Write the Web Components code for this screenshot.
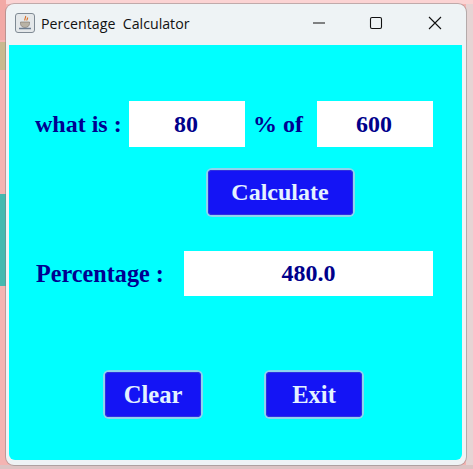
<!DOCTYPE html>
<html>
<head>
<meta charset="utf-8">
<title>Percentage Calculator</title>
<style>
  html, body { margin: 0; height: 469px; overflow: hidden; }
</style>
</head>
<body>
<desk-top>
  <app-window title="Percentage  Calculator">
    <calc-form></calc-form>
  </app-window>
</desk-top>

<script>
class DeskTop extends HTMLElement {
  constructor() {
    super();
    this.attachShadow({ mode: 'open' });
    this.shadowRoot.innerHTML = `
      <style>
        :host {
          display: block;
          width: 473px;
          height: 469px;
          box-sizing: border-box;
          padding: 4px 7px 4px 6px;
          background:
            linear-gradient(#f2a9a5, #f2a9a5) 0 0 / 6px 40px no-repeat,
            linear-gradient(#c9b98f, #c9b98f) 0 42px / 6px 28px no-repeat,
            linear-gradient(#45b9b0, #45b9b0) 0 194px / 6px 92px no-repeat,
            linear-gradient(#fbd3d3, #fbd3d3) 0 0 / 100% 4px no-repeat,
            linear-gradient(#dcc4c4, #dcc4c4) 0 465px / 100% 4px no-repeat,
            linear-gradient(#e6d4d4, #e6d4d4) 466px 0 / 7px 100% no-repeat,
            #f4b4b2;
        }
      </style>
      <slot></slot>`;
  }
}

class AppWindow extends HTMLElement {
  constructor() {
    super();
    this.attachShadow({ mode: 'open' });
    this.shadowRoot.innerHTML = `
      <style>
        :host {
          display: flex;
          flex-direction: column;
          width: 460px;
          height: 461px;
          box-sizing: border-box;
          background: #eef3f5;
          border-radius: 8px;
          box-shadow: 0 0 0 1px rgba(120,120,120,.45);
          overflow: hidden;
          padding: 0 4px 5px 3px;
        }
        .bar {
          display: flex;
          align-items: center;
          height: 41px;
          box-sizing: border-box;
          flex: none;
          padding: 0 0 3px 6px;
          font: 14.2px "Open Sans", "Noto Sans", sans-serif;
          color: #111;
          white-space: pre;
        }
        .icon { width: 20px; height: 20px; margin-right: 6px; flex: none; }
        .title { flex: 1; }
        .ctl { width: 59px; height: 38px; display: flex; align-items: center; justify-content: center; flex: none; }
        .ctl svg { width: 14px; height: 14px; }
        .ctl.min { margin-right: -2px; }
        .ctl.last { margin-right: -2px; }
        .body { flex: 1; display: block; min-height: 0; }
      </style>
      <div class="bar">
        <svg class="icon" viewBox="0 0 20 20">
          <rect x=".5" y=".5" width="19" height="19" rx="2.5" fill="#e4e8ea" stroke="#7f8a94"/>
          <path d="M10.5 3c1 1.500-1.500 2.500-.5 4.500M12.500 4.500c.5 1-1 2-.5 3" fill="none" stroke="#d9722a" stroke-width="1.200"/>
          <path d="M5.500 9h9v1.500c0 2.500-2 4-4.500 4s-4.500-1.500-4.500-4z" fill="#b9b3a6" stroke="#77706a" stroke-width=".6"/>
          <path d="M4 15.500h12" stroke="#6c7e92" stroke-width="1.300"/>
        </svg>
        <span class="title">${this.getAttribute('title')}</span>
        <div class="ctl min">
          <svg viewBox="0 0 14 14"><path d="M1 7h12" stroke="#111" stroke-width="1.100"/></svg>
        </div>
        <div class="ctl">
          <svg viewBox="0 0 14 14"><rect x="1.500" y="1.500" width="11" height="11" rx="1.500" fill="none" stroke="#111" stroke-width="1.100"/></svg>
        </div>
        <div class="ctl last">
          <svg viewBox="0 0 14 14"><path d="M1 1l12 12M13 1L1 13" stroke="#111" stroke-width="1.100"/></svg>
        </div>
      </div>
      <div class="body"><slot></slot></div>`;
  }
}

class CalcField extends HTMLElement {
  constructor() {
    super();
    this.attachShadow({ mode: 'open' });
    this.shadowRoot.innerHTML = `
      <style>
        :host {
          display: flex;
          align-items: center;
          justify-content: center;
          box-sizing: border-box;
          background: #fff;
          color: #00008b;
          font: bold 24px "Liberation Serif", serif;
        }
        :host(.small) { padding-right: 2px; }
      </style>
      <slot></slot>`;
  }
}

class CalcButton extends HTMLElement {
  constructor() {
    super();
    this.attachShadow({ mode: 'open' });
    this.shadowRoot.innerHTML = `
      <style>
        :host {
          display: flex;
          align-items: center;
          justify-content: center;
          box-sizing: border-box;
          background: #1414f5;
          color: #e4f2ff;
          font: bold 24px "Liberation Serif", serif;
          border-radius: 4px;
          box-shadow: inset 0 0 0 1px #3030e0, 0 0 0 2px #8fd4ee;
        }
      </style>
      <slot></slot>`;
  }
}

class CalcForm extends HTMLElement {
  constructor() {
    super();
    this.attachShadow({ mode: 'open' });
    this.shadowRoot.innerHTML = `
      <style>
        :host {
          display: flex;
          flex-direction: column;
          height: 100%;
          box-sizing: border-box;
          background: #00ffff;
          padding: 56px 0 0 26px;
          border-radius: 0 0 6px 6px;
          color: #000090;
          font: bold 24px "Liberation Serif", serif;
        }
        .row { display: flex; align-items: center; flex: none; }
        .inputs { height: 46px; }
        .inputs .lbl1 { width: 94px; }
        .inputs .lbl2 { width: 72px; padding-left: 8px; box-sizing: border-box; }
        .small { width: 116px; height: 46px; }
        .calc { width: 145px; height: 45px; margin: 23px 0 0 173px; padding: 0 1px 1px 0; }
        .result { height: 45px; margin-top: 36px; padding-left: 1px; }
        .result .lbl1 { width: 148px; font-size: 24.2px; }
        .wide { width: 249px; height: 45px; }
        .actions { margin: 76px 0 0 70px; gap: 65px; }
        .clear { width: 96px; height: 45px; font-size: 24.6px; }
        .exit { width: 96px; height: 45px; font-size: 24.6px; }
      </style>
      <div class="row inputs">
        <span class="lbl1">what is :</span>
        <calc-field class="small">80</calc-field>
        <span class="lbl2">% of</span>
        <calc-field class="small">600</calc-field>
      </div>
      <calc-button class="calc">Calculate</calc-button>
      <div class="row result">
        <span class="lbl1">Percentage :</span>
        <calc-field class="wide">480.0</calc-field>
      </div>
      <div class="row actions">
        <calc-button class="clear">Clear</calc-button>
        <calc-button class="exit">Exit</calc-button>
      </div>`;
  }
}

customElements.define('desk-top', DeskTop);
customElements.define('app-window', AppWindow);
customElements.define('calc-field', CalcField);
customElements.define('calc-button', CalcButton);
customElements.define('calc-form', CalcForm);
</script>
</body>
</html>
